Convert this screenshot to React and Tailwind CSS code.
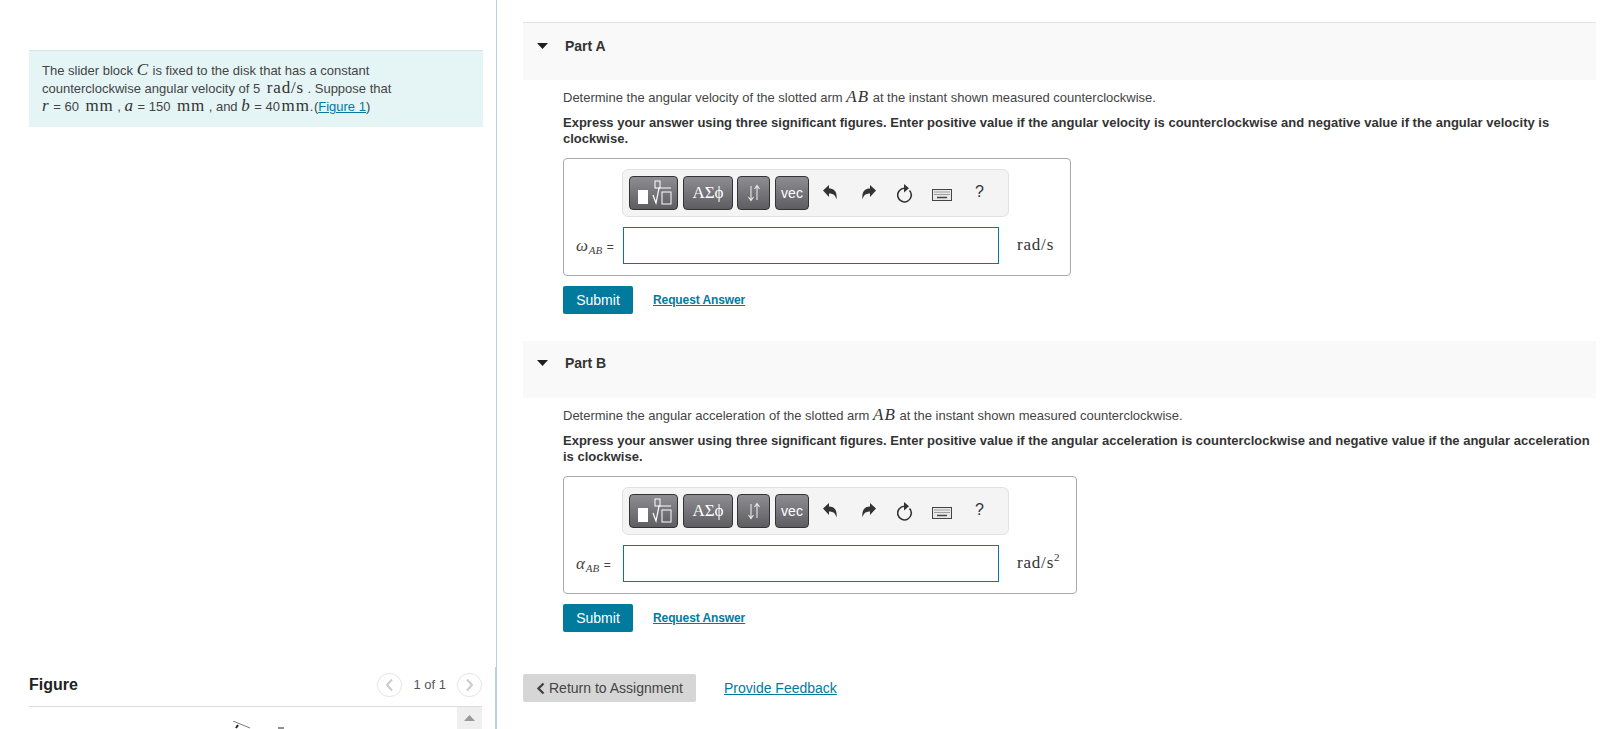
import React from "react";

function M({ children, className = "" }) {
  return <span className={`font-['Liberation_Serif','DejaVu_Serif',serif] text-[17px] tracking-[0.8px] leading-[1] ${className}`}>{children}</span>;
}
function V({ children }) {
  return <span className="font-['Liberation_Serif','DejaVu_Serif',serif] italic text-[17px] tracking-[1px] leading-[1] text-[#333]">{children}</span>;
}

function ToolBtn({ className = "", children }) {
  return (
    <div className={`h-[34px] rounded-[4px] border border-[#333] bg-gradient-to-b from-[#8e8e92] to-[#5e5e62] flex items-center justify-center text-white ${className}`}>
      {children}
    </div>
  );
}

function Toolbar() {
  return (
    <div className="-ml-[1px] w-[387px] h-[48px] rounded-[6px] border border-[#e2e2e2] bg-[#f4f4f4] flex items-center pl-[6px]">
      <ToolBtn className="w-[49px]">
        <svg width="46" height="30" viewBox="0 0 46 30">
          <rect x="7" y="12" width="10" height="14" fill="#fff" />
          <rect x="24" y="3" width="5" height="7" fill="none" stroke="#fff" strokeWidth="1" />
          <path d="M22 17l3 8 3-15h12" fill="none" stroke="#fff" strokeWidth="1.2" />
          <rect x="31" y="14" width="9" height="12" fill="none" stroke="#fff" strokeWidth="1" />
        </svg>
      </ToolBtn>
      <ToolBtn className="w-[50px] ml-[5px] font-['Liberation_Serif',serif] text-[17px]">ΑΣϕ</ToolBtn>
      <ToolBtn className="w-[33px] ml-[4px]">
        <svg width="20" height="20" viewBox="0 0 20 20" fill="none" stroke="#e8e8e8" strokeWidth="1.1">
          <path d="M7 3v14M4.500 14l2.500 3.500L9.500 14" />
          <path d="M13 17V3M10.500 6L13 2.500 15.500 6" />
        </svg>
      </ToolBtn>
      <ToolBtn className="w-[34px] ml-[5px] text-[14px] font-['Liberation_Sans',sans-serif]">vec</ToolBtn>
      <svg className="ml-[14px]" width="14" height="16" viewBox="0 0 14 16" fill="#333"><path d="M0 5.500L6 0v3.500c5 0 8.500 3 7.500 11-1-4-3-6-7.500-6V12z" /></svg>
      <svg className="ml-[25px]" width="14" height="16" viewBox="0 0 14 16" fill="#333"><path d="M14 5.500L8 0v3.500c-5 0-8.500 3-7.500 11 1-4 3-6 7.500-6V12z" /></svg>
      <svg className="ml-[21px]" width="16" height="19" viewBox="0 0 16 19" fill="none"><path d="M12.500 6.500A6.800 6.800 0 1 1 7.500 4.300" stroke="#333" strokeWidth="1.600" /><path d="M7 0l5 4.300L7 8.500z" fill="#333" /></svg>
      <svg className="ml-[19px] mt-[4px]" width="20" height="12" viewBox="0 0 20 12" fill="none"><rect x=".5" y=".5" width="19" height="11" fill="#e8e8e8" stroke="#444" /><path d="M2.500 3h15M2.500 5.500h15" stroke="#555" strokeDasharray="1 1" /><path d="M5 8.500h10" stroke="#444" strokeWidth="1.500" /></svg>
      <span className="ml-[23px] -mt-[2px] font-['Liberation_Sans',sans-serif] text-[16px] text-[#333]">?</span>
    </div>
  );
}

function AnswerBox({ width, label, unit }) {
  return (
    <div className={`${width} h-[118px] rounded-[4px] border border-[#aaa] pt-[10px] pl-[59px]`}>
      <Toolbar />
      <div className="relative flex items-center mt-[10px]">
        <div className="absolute left-[-47px] top-[7px] text-[#444] whitespace-nowrap">{label}</div>
        <div className="w-[376px] h-[37px] border border-[#007b9e] bg-white" />
        <div className="ml-[18px] -mt-[2px] text-[#333]">{unit}</div>
      </div>
    </div>
  );
}

function Part({ title, q, hint, box, top }) {
  return (
    <section>
      <div className={`bg-[#f9f9f9] flex items-start pl-[14px] w-[1073px] ${top ? "h-[58px] pt-[13px] border-t border-[#e2e2e2]" : "h-[57px] pt-[12px]"}`}>
        <svg className="mt-[7px]" width="11" height="6" viewBox="0 0 11 6"><path d="M0 0h11L5.500 6z" fill="#1f1f1f" /></svg>
        <span className="ml-[17px] text-[14px] font-bold text-[#333]">{title}</span>
      </div>
      <div className="pl-[40px]">
        <p className="mt-[8px] h-[18px] text-[13px] leading-[18px] text-[#444] whitespace-nowrap">{q}</p>
        <p className="mt-[9px] w-[1033px] text-[13px] leading-[16px] font-bold text-[#333]">{hint}</p>
        <div className="mt-[11px]">{box}</div>
        <div className="flex items-center mt-[10px]">
          <div className="w-[70px] h-[28px] rounded-[2px] bg-[#007b9e] text-white text-[14px] flex items-center justify-center">Submit</div>
          <a className="ml-[20px] text-[12px] tracking-[-0.1px] font-bold text-[#007b9e] underline">Request Answer</a>
        </div>
      </div>
    </section>
  );
}

export default function App() {
  return (
    <div className="h-[729px] w-[1606px] overflow-hidden bg-white flex font-['Liberation_Sans',Arial,sans-serif]">
      <aside className="w-[497px] shrink-0 border-r border-[#b9d0e2] h-full flex flex-col pt-[50px] pl-[29px] pr-[13px]">
        <div className="w-[454px] h-[77px] bg-[#e5f5f6] border-t border-[#d5e3e6] pl-[13px] pt-[10px] text-[13px] leading-[17px] text-[#444]">
          <div className="whitespace-nowrap">The slider block <V>C</V> is fixed to the disk that has a constant</div>
          <div className="whitespace-nowrap">counterclockwise angular velocity of 5 <M className="ml-[3px] text-[#333]">rad/s</M> . Suppose that</div>
          <div className="whitespace-nowrap"><V>r</V> = 60 <M className="ml-[3px] text-[#333]">mm</M> , <V>a</V> = 150 <M className="ml-[3px] text-[#333]">mm</M> , and <V>b</V> = 40 <M className="-ml-[2px] text-[#333]">mm</M>. <span className="-ml-[3px]">(</span><a className="text-[#007b9e] underline">Figure 1</a>)</div>
        </div>
        <div className="mt-auto relative">
          <div className="absolute right-[-13px] top-[17px] bottom-0 w-[1px] bg-[#b9d0e2]" />
          <div className="h-[57px] border-b border-[#ddd] flex items-start pt-[26px] w-[453px]">
            <span className="text-[16px] font-bold text-[#222] leading-[18px]">Figure</span>
            <div className="ml-auto flex items-center text-[13px] text-[#555] -mt-[3px]">
              <div className="w-[25px] h-[24px] rounded-full border border-[#e5e5e5] flex items-center justify-center">
                <svg width="9" height="14" viewBox="0 0 9 14" fill="none"><path d="M7 1.500L2 7l5 5.500" stroke="#ccc" strokeWidth="2" /></svg>
              </div>
              <span className="mx-[11px]">1 of 1</span>
              <div className="w-[25px] h-[24px] rounded-full border border-[#e5e5e5] flex items-center justify-center">
                <svg width="9" height="14" viewBox="0 0 9 14" fill="none"><path d="M2 1.500L7 7l-5 5.500" stroke="#ccc" strokeWidth="2" /></svg>
              </div>
            </div>
          </div>
          <div className="h-[22px] w-[453px] relative overflow-hidden">
            <svg className="absolute left-[176px] top-[14px]" width="90" height="8" viewBox="0 0 90 8" fill="none"><path d="M28 0l17 7" stroke="#777" /><path d="M31 7l2-3" stroke="#222" strokeWidth="2" /><path d="M73 7h6" stroke="#222" /></svg>
            <div className="absolute right-0 top-0 w-[25px] h-[22px] bg-[#efefef] flex items-center justify-center">
              <svg width="11" height="6" viewBox="0 0 11 6"><path d="M5.500 0L11 6H0z" fill="#999" /></svg>
            </div>
          </div>
        </div>
      </aside>
      <main className="pl-[26px] pt-[22px] flex-1">
        <Part
          top
          title="Part A"
          q={<>Determine the angular velocity of the slotted arm <V>AB</V> at the instant shown measured counterclockwise.</>}
          hint="Express your answer using three significant figures. Enter positive value if the angular velocity is counterclockwise and negative value if the angular velocity is clockwise."
          box={<AnswerBox width="w-[508px]" label={<><M className="italic">ω</M><span className="font-['Liberation_Serif',serif] italic text-[11px] align-[-3px]">AB</span> <span className="text-[12px]">=</span></>} unit={<M>rad/s</M>} />}
        />
        <div className="h-[27px]" />
        <Part
          title="Part B"
          q={<>Determine the angular acceleration of the slotted arm <V>AB</V> at the instant shown measured counterclockwise.</>}
          hint="Express your answer using three significant figures. Enter positive value if the angular acceleration is counterclockwise and negative value if the angular acceleration is clockwise."
          box={<AnswerBox width="w-[514px]" label={<><M className="italic">α</M><span className="font-['Liberation_Serif',serif] italic text-[11px] align-[-3px]">AB</span> <span className="text-[12px]">=</span></>} unit={<M>rad/s<sup className="text-[11px] -top-[7px] relative align-baseline">2</sup></M>} />}
        />
        <div className="flex items-center mt-[42px]">
          <div className="w-[173px] h-[28px] rounded-[2px] bg-[#d6d6d6] flex items-center pl-[13px] text-[14px] text-[#444]">
            <svg width="9" height="13" viewBox="0 0 9 13" fill="none"><path d="M7.500 1.500L2.500 6.500l5 5" stroke="#444" strokeWidth="2.400" /></svg>
            <span className="ml-[4px]">Return to Assignment</span>
          </div>
          <a className="ml-[28px] text-[14px] text-[#007b9e] underline">Provide Feedback</a>
        </div>
      </main>
    </div>
  );
}
